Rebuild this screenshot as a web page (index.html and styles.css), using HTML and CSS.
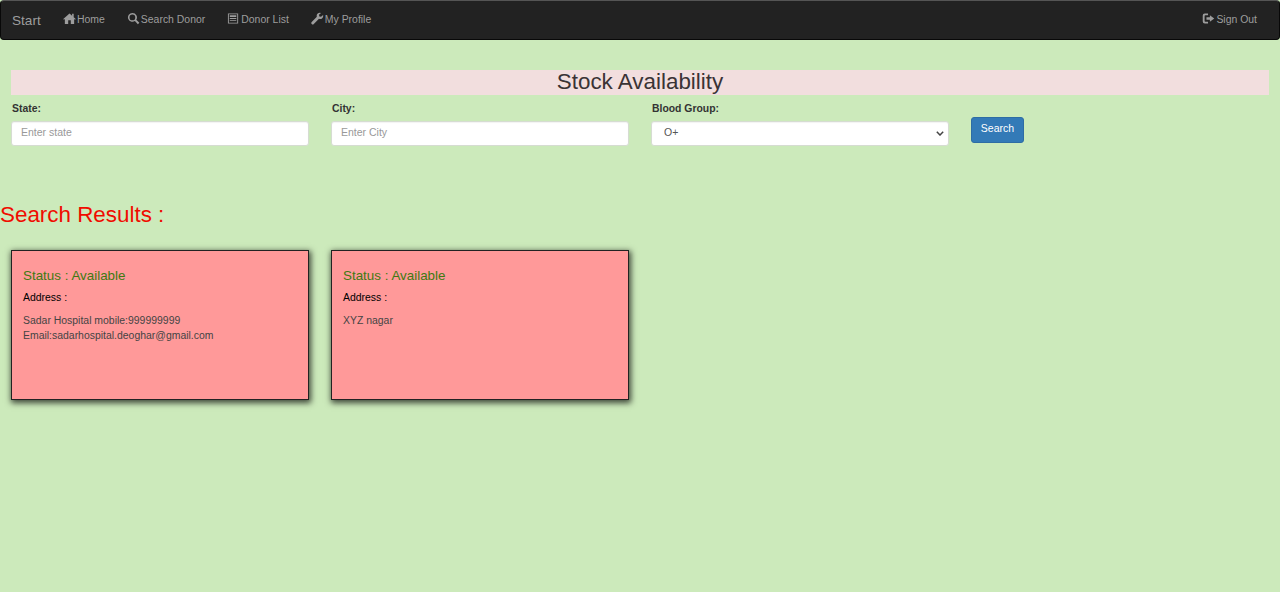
FILE: index.html
```html
<!DOCTYPE html>
<html lang="en">
<head>
<meta charset="utf-8">
<title>Stock Availability</title>
<link rel="stylesheet" href="styles.css">
</head>
<body>
<nav class="navbar">
  <a class="brand" href="#">Start</a>
  <a class="nav-link" href="#"><svg class="icon" viewBox="0 0 14 14"><path d="M7 1.500 0.300 7.600l.7.7L2 7.500V13h3.600V9h2.800v4H12V7.500l1 .8.7-.7L11.500 5.600V2H9.800v2L7 1.500z"/></svg>Home</a>
  <a class="nav-link" href="#"><svg class="icon" viewBox="0 0 14 14"><path fill-rule="evenodd" d="M5.800 1a4.800 4.800 0 1 0 2.700 8.800l3.200 3.400 1.600-1.600-3.300-3.300A4.800 4.800 0 0 0 5.800 1zm0 1.700a3.100 3.100 0 1 1 0 6.200 3.100 3.100 0 0 1 0-6.200z"/></svg>Search Donor</a>
  <a class="nav-link" href="#"><svg class="icon" viewBox="0 0 14 14"><path fill-rule="evenodd" d="M1 1.500h11v11H1v-11zm1 1v9h9v-9H2zm1 1h7v2H3v-2zm0 3h7v1H3v-1zm0 2h7v1H3v-1z"/></svg>Donor List</a>
  <a class="nav-link" href="#"><svg class="icon" viewBox="0 0 14 14"><path d="M13 3.200 10.800 5.200 9 4.800 8.600 3 10.800 1a3.400 3.400 0 0 0-4.500 4.200L.8 10.800a1.500 1.500 0 0 0 2.200 2.200l5.600-5.600A3.400 3.400 0 0 0 13 3.200z"/></svg>My Profile</a>
  <a class="nav-link nav-right" href="#"><svg class="icon" viewBox="0 0 14 14"><path d="M6.500 1.500H3A2.200 2.200 0 0 0 .8 3.700v6.600A2.200 2.200 0 0 0 3 12.500h3.500v-2H3.600a.8.8 0 0 1-.8-.8V4.300a.8.8 0 0 1 .8-.8h2.900v-2z"/><path d="M8.500 3.500v2.200H4.800v2.600h3.700v2.200L13.200 7 8.500 3.500z"/></svg>Sign Out</a>
</nav>

<main class="page">
  <h2 class="stock-title">Stock Availability</h2>
  <form class="search-row">
    <div class="field">
      <label class="field-label" for="state">State:</label>
      <input class="control" id="state" type="text" placeholder="Enter state">
    </div>
    <div class="field">
      <label class="field-label" for="city">City:</label>
      <input class="control" id="city" type="text" placeholder="Enter City">
    </div>
    <div class="field">
      <label class="field-label" for="group">Blood Group:</label>
      <select class="control control-select" id="group"><option>O+</option></select>
    </div>
    <button class="search-btn" type="button">Search</button>
  </form>

  <h3 class="results-title">Search Results :</h3>

  <section class="cards">
    <article class="card">
      <h4 class="status">Status : Available</h4>
      <h5 class="address-label">Address :</h5>
      <p class="address">Sadar Hospital mobile:999999999<br>Email:sadarhospital.deoghar@gmail.com</p>
    </article>
    <article class="card">
      <h4 class="status">Status : Available</h4>
      <h5 class="address-label">Address :</h5>
      <p class="address">XYZ nagar</p>
    </article>
  </section>
</main>
</body>
</html>
```

FILE: styles.css
```css
* {
  box-sizing: border-box;
}

html,
body {
  margin: 0;
  min-height: 592px;
}

body {
  background: #cceabb;
  color: #333;
  font-family: "Liberation Sans", Arial, sans-serif;
  font-size: 11px;
  line-height: 15px;
  overflow: hidden;
}

.navbar {
  display: flex;
  align-items: center;
  height: 40px;
  padding-left: 11px;
  background: #222;
  border: 1px solid #080808;
  border-top-color: #555;
  border-radius: 4px;
}

.navbar a {
  color: #9d9d9d;
  text-decoration: none;
}

.brand {
  width: 29px;
  margin-right: 22px;
  font-size: 13.600px;
}

.nav-link {
  display: flex;
  align-items: center;
  margin-right: 22px;
  padding-bottom: 2px;
  font-size: 10.450px;
}

.nav-right {
  margin-left: auto;
}

.icon {
  width: 13px;
  height: 13px;
  margin-right: 1px;
  margin-top: -1px;
  fill: #9d9d9d;
}

.page {
  padding: 30px 11px 0;
}

.stock-title {
  margin: 0;
  height: 25px;
  background: #f2dede;
  color: #3a3335;
  font-size: 22.400px;
  font-weight: 400;
  line-height: 24px;
  text-align: center;
}

.search-row {
  display: flex;
  align-items: flex-start;
  gap: 22px;
  margin-top: 7px;
}

.field {
  width: 298px;
}

.field-label {
  display: block;
  height: 18.500px;
  padding-left: 1px;
  font-size: 10.400px;
  font-weight: 700;
  line-height: 14px;
}

.control {
  display: block;
  width: 100%;
  height: 25px;
  padding: 0 9px 2px;
  background: #fff;
  border: 1px solid #d6dcd2;
  border-radius: 3px;
  box-shadow: inset 0 1px 1px rgba(0, 0, 0, 0.05);
  color: #555;
  font-family: inherit;
  font-size: 10.500px;
}

.control::placeholder {
  color: #999;
  opacity: 1;
}

.control-select {
  appearance: none;
  padding-left: 12px;
  background: #fff url("data:image/svg+xml,%3Csvg xmlns='http://www.w3.org/2000/svg' width='8' height='5' viewBox='0 0 8 5'%3E%3Cpath d='M.8.8 4 4l3.200-3.200' fill='none' stroke='%23444' stroke-width='1.500'/%3E%3C/svg%3E") no-repeat right 4px center;
}

.search-btn {
  height: 26px;
  width: 53px;
  margin-top: 15px;
  padding: 0 0 4px;
  background: #337ab7;
  border: 1px solid #2e6da4;
  border-radius: 3px;
  color: #fff;
  font-family: inherit;
  font-size: 10.500px;
}

.results-title {
  margin: 56px 0 0 -11px;
  color: #f00c00;
  font-size: 22.400px;
  font-weight: 400;
  line-height: 26px;
}

.cards {
  display: flex;
  gap: 22px;
  margin-top: 22.500px;
}

.card {
  width: 298px;
  height: 150px;
  padding: 17px 11px 0;
  background: #ff9999;
  border: 1px solid #222;
  box-shadow: 1px 2px 6px 1px rgba(0, 0, 0, 0.7);
}

.status {
  margin: 0;
  color: #3f7a12;
  font-size: 13.400px;
  font-weight: 400;
  line-height: 16px;
}

.address-label {
  margin: 6px 0 0;
  color: #000;
  font-size: 10.450px;
  font-weight: 400;
  line-height: 15px;
}

.address {
  margin: 9px 0 0;
  color: #444;
  font-size: 10.450px;
  line-height: 14.500px;
}
```
